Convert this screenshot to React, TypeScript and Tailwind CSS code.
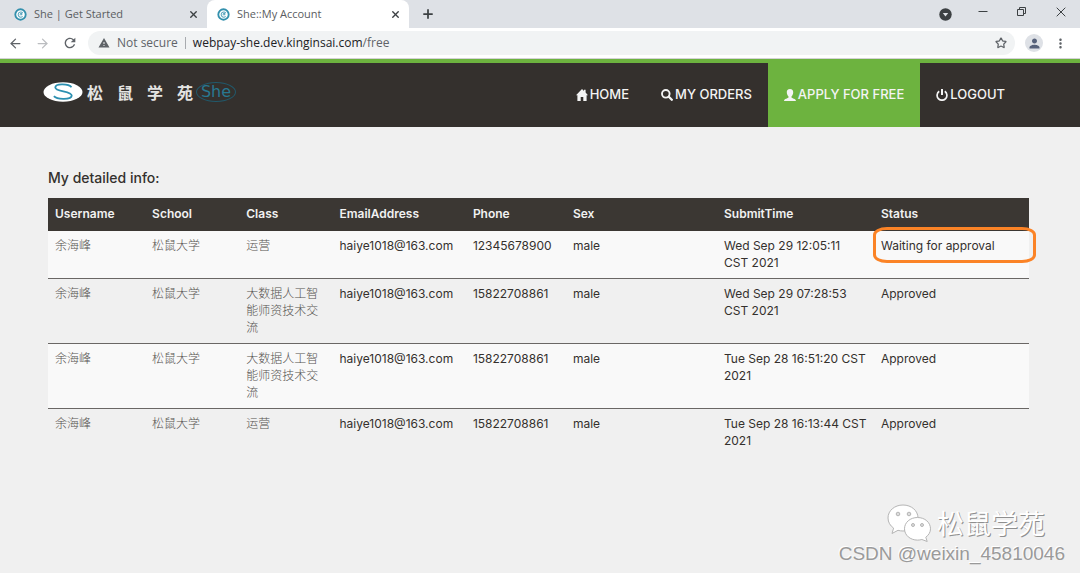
import { ReactNode } from "react";
import { ArrowLeft, ArrowRight, Plus, Star, X } from "lucide-react";
import { MdRefresh, MdWarning, MdPerson, MdMoreVert } from "react-icons/md";
import clsx from "clsx";

interface Application {
  username: string;
  school: string;
  course: string;
  email: string;
  phone: string;
  sex: string;
  submitTime: string;
  status: string;
}

const applications: Application[] = [
  {
    username: "余海峰",
    school: "松鼠大学",
    course: "运营",
    email: "haiye1018@163.com",
    phone: "12345678900",
    sex: "male",
    submitTime: "Wed Sep 29 12:05:11 CST 2021",
    status: "Waiting for approval",
  },
  {
    username: "余海峰",
    school: "松鼠大学",
    course: "大数据人工智能师资技术交流",
    email: "haiye1018@163.com",
    phone: "15822708861",
    sex: "male",
    submitTime: "Wed Sep 29 07:28:53 CST 2021",
    status: "Approved",
  },
  {
    username: "余海峰",
    school: "松鼠大学",
    course: "大数据人工智能师资技术交流",
    email: "haiye1018@163.com",
    phone: "15822708861",
    sex: "male",
    submitTime: "Tue Sep 28 16:51:20 CST 2021",
    status: "Approved",
  },
  {
    username: "余海峰",
    school: "松鼠大学",
    course: "运营",
    email: "haiye1018@163.com",
    phone: "15822708861",
    sex: "male",
    submitTime: "Tue Sep 28 16:13:44 CST 2021",
    status: "Approved",
  },
];

const columns = [
  { label: "Username", width: "w-[9.9%]" },
  { label: "School", width: "w-[9.6%]" },
  { label: "Class", width: "w-[9.5%]" },
  { label: "EmailAddress", width: "w-[13.6%]" },
  { label: "Phone", width: "w-[10.2%]" },
  { label: "Sex", width: "w-[15.4%]" },
  { label: "SubmitTime", width: "w-[16%]" },
  { label: "Status", width: "w-[15.8%]" },
];

function Favicon() {
  return (
    <svg viewBox="0 0 14 14" className="h-[13px] w-[13px] shrink-0" fill="none">
      <circle cx="7" cy="7" r="5.6" fill="#fff" stroke="#3390ad" strokeWidth="2" />
      <path d="M9.4 5.2A2.8 2.8 0 1 0 9.3 9M6 7.2h2.4V5.8H6.6" stroke="#5aa6be" strokeWidth="1.1" />
    </svg>
  );
}

function BrowserTab({ title, active = false }: { title: string; active?: boolean }) {
  return (
    <div
      className={clsx(
        "flex h-7 items-center",
        active ? "w-[202px] rounded-t-lg bg-white pr-2 pl-[10px]" : "w-[207px] pr-2 pl-[14px]"
      )}
    >
      <Favicon />
      <span className="ml-[7px] flex-1 text-[11px] text-[#5a5d61]">{title}</span>
      <button aria-label={`Close ${title}`}>
        <X className="h-[11px] w-[11px] text-[#3c4043]" strokeWidth={3} />
      </button>
    </div>
  );
}

function BrowserChrome() {
  return (
    <div className="border-b border-[#d3d3d5] bg-white font-['Open_Sans','Noto_Sans',sans-serif]">
      {/* Tab strip */}
      <div className="flex h-7 items-center bg-[#dee1e6]">
        <BrowserTab title="She | Get Started" />
        <BrowserTab title="She::My Account" active />
        <button aria-label="New tab" className="ml-3">
          <Plus className="h-[14px] w-[14px] text-[#3c4043]" strokeWidth={3} />
        </button>
        <div className="ml-auto flex items-center pr-[14px] text-[#3c4043]">
          <button aria-label="Search tabs">
            <svg viewBox="0 0 13 13" className="h-[13px] w-[13px]">
              <circle cx="6.5" cy="6.5" r="6.2" fill="#3c4043" />
              <path d="M3.8 5h5.4L6.5 8.6z" fill="#dee1e6" />
            </svg>
          </button>
          <button aria-label="Minimize" className="mb-1 ml-[26px]">
            <svg viewBox="0 0 10 10" className="h-[10px] w-[10px]">
              <path d="M0.5 4.5h9" stroke="#3c4043" />
            </svg>
          </button>
          <button aria-label="Restore" className="mb-1 ml-[28px]">
            <svg viewBox="0 0 10 10" className="h-[10px] w-[10px]" fill="none" stroke="#3c4043">
              <path d="M1.5 2.5h6v6h-6zM3.500 2.500v-2h6v6h-2" />
            </svg>
          </button>
          <button aria-label="Close" className="mb-1 ml-[30px]">
            <svg viewBox="0 0 10 10" className="h-[10px] w-[10px]" stroke="#3c4043">
              <path d="M0.7 0.7l8.6 8.6M9.3 0.7L0.7 9.3" />
            </svg>
          </button>
        </div>
      </div>

      {/* Toolbar */}
      <div className="flex h-[30px] items-center pr-3 pl-2">
        <button aria-label="Back">
          <ArrowLeft className="h-[15px] w-[15px] text-[#5f6368]" />
        </button>
        <button aria-label="Forward" className="ml-3">
          <ArrowRight className="h-[15px] w-[15px] text-[#bbbdc0]" />
        </button>
        <button aria-label="Reload" className="ml-3">
          <MdRefresh className="h-4 w-4 text-[#5f6368]" />
        </button>
        <div className="ml-[10px] flex h-6 flex-1 items-center rounded-full bg-[#f1f3f4] pr-2 pl-[10px] text-[12px] text-[#5f6368]">
          <MdWarning className="h-3 w-3" />
          <span className="ml-[7px]">Not secure</span>
          <span className="mx-[7px] h-3 w-px bg-[#a8abaf]" />
          <span className="flex-1">
            <span className="text-[#202124]">webpay-she.dev.kinginsai.com</span>/free
          </span>
          <button aria-label="Bookmark this page">
            <Star className="h-3 w-3 text-[#5f6368]" strokeWidth={2.5} />
          </button>
        </div>
        <button
          aria-label="Profile"
          className="ml-[10px] flex h-[18px] w-[18px] items-center justify-center rounded-full bg-[#dee1e6]"
        >
          <MdPerson className="h-[15px] w-[15px] text-[#56617a]" />
        </button>
        <button aria-label="Menu" className="ml-[10px]">
          <MdMoreVert className="h-[15px] w-[15px] text-[#5f6368]" />
        </button>
      </div>
    </div>
  );
}

function Logo() {
  return (
    <a href="#" className="flex items-center pb-[6px]" aria-label="She">
      <svg viewBox="0 0 40 20" className="h-5 w-10">
        <ellipse cx="20" cy="10" rx="19.5" ry="9.7" fill="#fff" />
        <path
          d="M28.5 5.2C26 1.9 12.5 1 12.3 5.4c-.1 4.3 16.5 3.6 16.4 8.2-.2 4.2-14.5 4.400-17.800.600"
          fill="none"
          stroke="#2b8fb0"
          strokeWidth="1.8"
        />
      </svg>
      <span className="ml-1 flex w-[106px] justify-between text-[16px] leading-5 font-bold text-[#e4e4e2] font-['Noto_Sans_CJK_SC',sans-serif]">
        <span>松</span>
        <span>鼠</span>
        <span>学</span>
        <span>苑</span>
      </span>
      <span className="ml-[3px] flex h-5 w-10 items-center justify-center rounded-[50%] border border-[#21596b] text-[16px] leading-none text-[#287891] font-['DejaVu_Sans',sans-serif]">
        She
      </span>
    </a>
  );
}

function NavLink({ label, active = false, children }: { label: string; active?: boolean; children: ReactNode }) {
  return (
    <a
      href="#"
      className={clsx(
        "flex h-16 items-center gap-[2px] px-4 text-[13px] font-medium text-[#f4f4f4]",
        active && "bg-[#6db33f]"
      )}
    >
      <svg viewBox="0 0 12 12" className="h-3 w-3 shrink-0" fill="currentColor">
        {children}
      </svg>
      {label}
    </a>
  );
}

function SiteHeader() {
  return (
    <header className="flex items-center justify-between border-t-4 border-[#6db33f] bg-[#34302d] pr-[59px] pl-[43px]">
      <Logo />
      <nav className="flex font-['Inter','Open_Sans',sans-serif]">
        <NavLink label="HOME">
          <path d="M6 0l2 2V.8h1.6v2.8L12 6.2h-1.4V12H7.300V8H4.700v4H1.400V6.200H0z" />
        </NavLink>
        <NavLink label="MY ORDERS">
          <circle cx="4.8" cy="4.8" r="3.8" fill="none" stroke="currentColor" strokeWidth="1.9" />
          <path d="M7.800 7.800l3 3" stroke="currentColor" strokeWidth="2.300" strokeLinecap="round" />
        </NavLink>
        <NavLink label="APPLY FOR FREE" active>
          <path d="M6 0C3.700 0 2.700 1.500 2.800 3.500c.1 1.800.8 3.200 1.700 4v1C4 9.500.200 9.500 0 12h12c-.2-2.500-4-2.500-4.500-3.500v-1c.9-.8 1.600-2.200 1.700-4C9.300 1.500 8.300 0 6 0z" />
        </NavLink>
        <NavLink label="LOGOUT">
          <path d="M3.200 2.300a4.900 4.900 0 1 0 5.600 0" fill="none" stroke="currentColor" strokeWidth="1.700" />
          <path d="M5 0h2v6H5z" />
        </NavLink>
      </nav>
    </header>
  );
}

function ApplicationTable() {
  const cell = "px-[7px] pt-[6px] pb-[7px]";
  const cjkCell = clsx(cell, "font-light text-[#55524f]");

  return (
    <table className="w-full table-fixed border-collapse text-left text-[12px] leading-[17px] text-[#34302d]">
      <thead className="bg-[#3b3733] text-[#f1f1f1]">
        <tr>
          {columns.map((col) => (
            <th key={col.label} className={clsx("px-[7px] pt-[7px] pb-[9px] font-semibold", col.width)}>
              {col.label}
            </th>
          ))}
        </tr>
      </thead>
      <tbody>
        {applications.map((app, i) => {
          const waiting = app.status !== "Approved";
          return (
            <tr
              key={i}
              className="border-b border-[#6a6765] align-top last:border-b-0 odd:bg-[#f9f9f9] even:bg-[#f0f0f0]"
            >
              <td className={cjkCell}>{app.username}</td>
              <td className={cjkCell}>{app.school}</td>
              <td className={cjkCell}>{app.course}</td>
              <td className={cell}>{app.email}</td>
              <td className={cell}>{app.phone}</td>
              <td className={cell}>{app.sex}</td>
              <td className={cell}>{app.submitTime}</td>
              <td className={clsx(cell, waiting && "relative")}>
                {app.status}
                {/* Highlight ring around the pending status */}
                {waiting && (
                  <span className="absolute -top-[4px] -right-[7px] -left-[1px] h-9 rounded-[14px/8px] border-[3px] border-[#fb8326]" />
                )}
              </td>
            </tr>
          );
        })}
      </tbody>
    </table>
  );
}

function Watermark() {
  return (
    <div className="absolute right-[15px] bottom-[7px] flex flex-col items-end">
      <div className="mr-[20px] flex items-center gap-[6px]">
        <svg viewBox="0 0 44 38" className="h-[38px] w-11" fill="#fff" stroke="#b5b5b5" strokeWidth="1">
          <path d="M16 1C7.5 1 1 6.7 1 14c0 4.2 2.2 7.7 5.6 10.1L5 29.5l6-3.2c1.6.5 3.3.7 5 .7 8.500 0 15-5.700 15-13S24.500 1 16 1z" />
          <path d="M30.500 13.500c-7.300 0-13 4.900-13 11.300s5.700 11.300 13 11.300c1.600 0 3-.2 4.400-.6l5.300 2-1.400-4.300c2.900-2.100 4.700-5 4.700-8.400 0-6.400-5.700-11.300-13-11.300z" />
          <g fill="#ddd">
            <circle cx="11" cy="10" r="1.800" />
            <circle cx="22" cy="10" r="1.800" />
            <circle cx="26" cy="21" r="1.500" />
            <circle cx="35" cy="21" r="1.500" />
          </g>
        </svg>
        <span className="text-[27px] leading-[38px] text-white font-['Noto_Sans_CJK_SC',sans-serif] [text-shadow:1px_1px_0_#8f8f8f]">
          松鼠学苑
        </span>
      </div>
      <span className="text-[19px] leading-6 text-[#9a9a9a] font-['Liberation_Sans',sans-serif] [text-shadow:-1px_-1px_0_#fff]">
        CSDN @weixin_45810046
      </span>
    </div>
  );
}

export default function App() {
  return (
    <div className="relative flex min-h-screen flex-col bg-[#f0f0f0]">
      <BrowserChrome />
      <SiteHeader />
      <main className="pt-[41px] pr-[51px] pl-12 font-['Inter','Noto_Sans_CJK_SC',sans-serif]">
        <h1 className="mb-[10px] text-[14px] leading-5 font-medium text-[#34302d]">My detailed info:</h1>
        <ApplicationTable />
      </main>
      <Watermark />
    </div>
  );
}
